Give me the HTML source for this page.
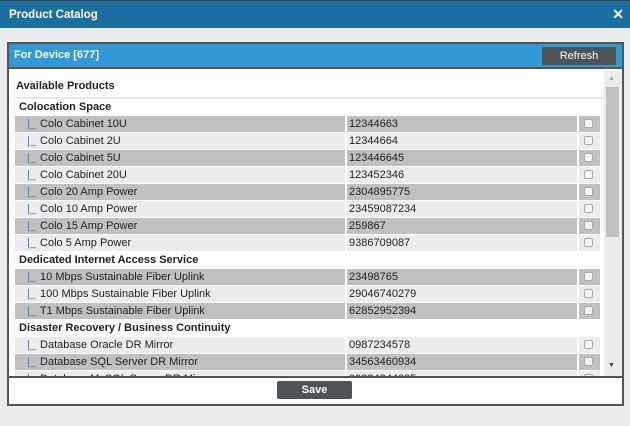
<!DOCTYPE html><html><head><style>
*{margin:0;padding:0;box-sizing:border-box}
body{width:630px;height:426px;background:#ebecee;font-family:"Liberation Sans",sans-serif;font-size:11px;color:#222;position:relative;overflow:hidden}
.title{position:absolute;left:0;top:0;width:630px;height:28px;background:#1a6fa0;border-top:1px solid #444;color:#fff;font-weight:bold;font-size:11.5px;padding:8px 0 0 9px}
.x{position:absolute;right:6px;top:5px;font-size:14px;font-weight:bold}
.panel{position:absolute;left:7px;top:42px;width:617px;height:364px;border:2px solid #555;background:#fff}
.hdr{height:25px;background:#3399d6;color:#fff;font-weight:bold;font-size:11px;padding:5px 0 0 5px;border-bottom:2px solid #555}
.ref{position:absolute;left:533px;top:3px;width:74px;height:18px;background:#4d5356;border-radius:2px;color:#fff;text-align:center;line-height:18px;font-weight:normal}
.content{position:absolute;left:0;top:27px;width:613px;height:305px;overflow:hidden}
.sb{position:absolute;left:595px;top:0;width:18px;height:305px;background:#ebecee}
.thumb{position:absolute;left:597px;top:16px;width:13px;height:150px;background:#c1c1c1}
.avail{position:absolute;left:7px;top:9px;font-weight:bold}
.line{position:absolute;left:6px;top:26px;width:589px;height:2px;background:#e8e8e8}
.rows{position:absolute;left:6px;top:28px;width:585px}
.g{height:17px;line-height:17px;font-weight:bold;padding-left:4px}
.r{height:17px;display:flex;border-bottom:1px solid #fff}
.r div{line-height:16px}
.a{width:332px;padding-left:12px;border-right:2px solid #fff}
.a span{color:#3a7fc0;margin-right:1px}
.b{width:232px;padding-left:2px;border-right:2px solid #fff}
.c{width:19px;position:relative}
.c i{position:absolute;left:5px;top:3px;width:9px;height:9px;border:1px solid #aaa;border-radius:2px;background:#f4f4f4}
.d{background:#c0c0c0}.l{background:#ececec}
.foot{position:absolute;left:0;top:332px;width:613px;height:28px;border-top:2px solid #555;background:#fff}
.save{position:absolute;left:268px;top:3px;width:75px;height:18px;background:#4d5356;border-radius:2px;color:#fff;font-weight:bold;text-align:center;line-height:18px}
</style></head><body>
<div class="title">Product Catalog<span class="x">✕</span></div>
<div class="panel">
<div class="hdr">For Device [677]<div class="ref">Refresh</div></div>
<div class="content">
<div class="avail">Available Products</div><div class="line"></div>
<div class="rows">
<div class="g">Colocation Space</div>
<div class="r d"><div class="a"><span>|_</span> Colo Cabinet 10U</div><div class="b">12344663</div><div class="c"><i></i></div></div>
<div class="r l"><div class="a"><span>|_</span> Colo Cabinet 2U</div><div class="b">12344664</div><div class="c"><i></i></div></div>
<div class="r d"><div class="a"><span>|_</span> Colo Cabinet 5U</div><div class="b">123446645</div><div class="c"><i></i></div></div>
<div class="r l"><div class="a"><span>|_</span> Colo Cabinet 20U</div><div class="b">123452346</div><div class="c"><i></i></div></div>
<div class="r d"><div class="a"><span>|_</span> Colo 20 Amp Power</div><div class="b">2304895775</div><div class="c"><i></i></div></div>
<div class="r l"><div class="a"><span>|_</span> Colo 10 Amp Power</div><div class="b">23459087234</div><div class="c"><i></i></div></div>
<div class="r d"><div class="a"><span>|_</span> Colo 15 Amp Power</div><div class="b">259867</div><div class="c"><i></i></div></div>
<div class="r l"><div class="a"><span>|_</span> Colo 5 Amp Power</div><div class="b">9386709087</div><div class="c"><i></i></div></div>
<div class="g">Dedicated Internet Access Service</div>
<div class="r d"><div class="a"><span>|_</span> 10 Mbps Sustainable Fiber Uplink</div><div class="b">23498765</div><div class="c"><i></i></div></div>
<div class="r l"><div class="a"><span>|_</span> 100 Mbps Sustainable Fiber Uplink</div><div class="b">29046740279</div><div class="c"><i></i></div></div>
<div class="r d"><div class="a"><span>|_</span> T1 Mbps Sustainable Fiber Uplink</div><div class="b">62852952394</div><div class="c"><i></i></div></div>
<div class="g">Disaster Recovery / Business Continuity</div>
<div class="r l"><div class="a"><span>|_</span> Database Oracle DR Mirror</div><div class="b">0987234578</div><div class="c"><i></i></div></div>
<div class="r d"><div class="a"><span>|_</span> Database SQL Server DR Mirror</div><div class="b">34563460934</div><div class="c"><i></i></div></div>
<div class="r l"><div class="a"><span>|_</span> Database MySQL Server DR Mirror</div><div class="b">09834844085</div><div class="c"><i></i></div></div>
</div>
<div class="sb"></div><div class="thumb"></div>
<div style="position:absolute;left:599px;top:4px;font-size:7px;color:#aaa">▲</div>
<div style="position:absolute;left:599px;top:291px;font-size:7px;color:#444">▼</div>
</div>
<div class="foot"><div class="save">Save</div></div>
</div>
</body></html>
